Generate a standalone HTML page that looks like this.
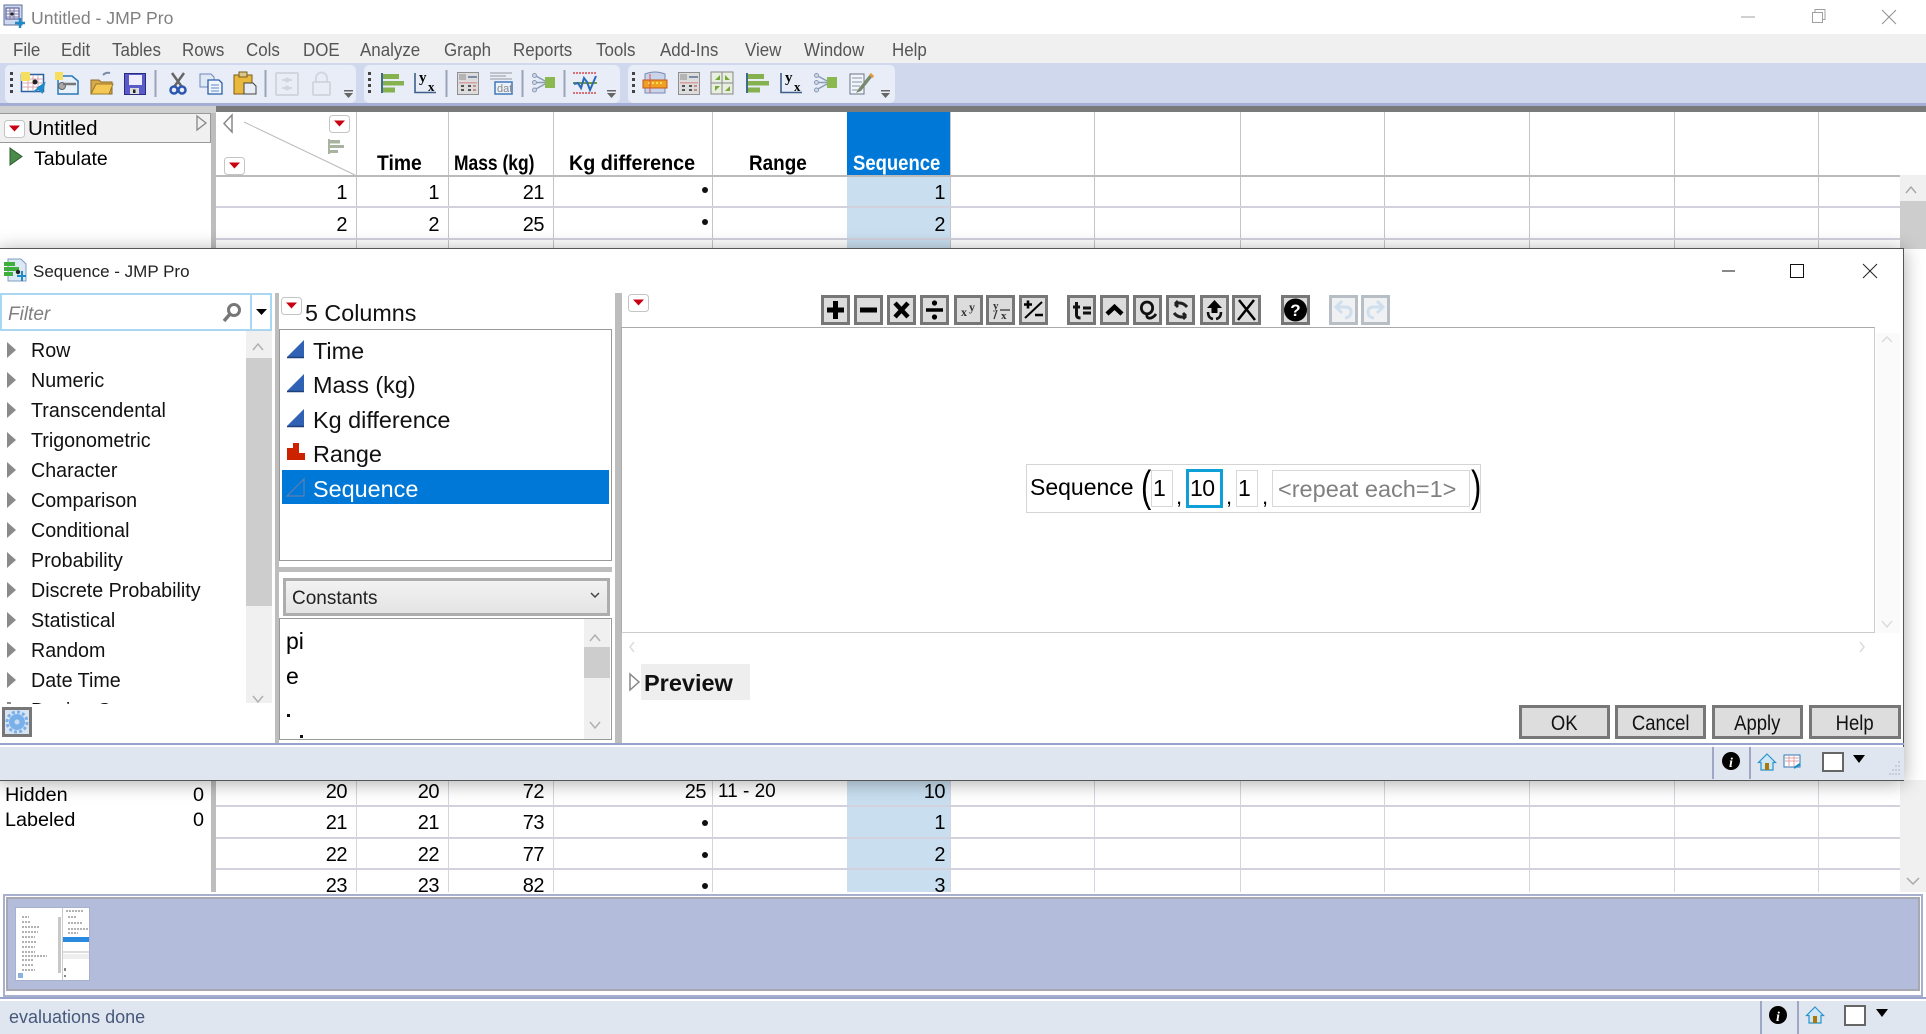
<!DOCTYPE html>
<html lang="en"><head><meta charset="utf-8"><title>Sequence - JMP Pro</title>
<style>
html,body{margin:0;padding:0;width:1926px;height:1034px;overflow:hidden;background:#fff;font-family:"Liberation Sans",sans-serif;color:#000}
.t{position:absolute;line-height:0;white-space:nowrap}
.r{transform:translateX(-100%)}
.b{position:absolute;box-sizing:border-box}
.m{font-size:18px;color:#555;top:50px;transform:scaleX(.94);transform-origin:left}
.n{font-size:20px;letter-spacing:-.5px;transform:translateX(-100%)}
.h{font-size:21px;font-weight:bold;top:164px;transform-origin:left}
.tr{font-size:20.5px;left:31px;color:#111;transform:scaleX(.96);transform-origin:left}
.c{font-size:23.4px;left:313px;color:#111}
.v{background:#d5d5e0;width:1px}
.hl{background:#d2d2de;height:2px}
.fb{position:absolute;top:295px;width:29px;height:30px;box-sizing:border-box;border:3px solid #777;background:#dcdcdc}
.fb svg{display:block;width:23px;height:24px}
.fb.d{border-color:#b7bec6;background:#f0f1f2}
.btn{position:absolute;top:705px;width:91px;height:34px;box-sizing:border-box;border:3px solid #777;background:#dddddd;text-align:center;font-size:21px;line-height:31px;color:#111}
.btn span{display:inline-block;transform:scaleX(.88)}
.g{position:absolute;top:65px;height:38px;background:#e8edf8;border-radius:5px}
.fx{position:absolute;top:470px;height:37px;box-sizing:border-box;border:1px solid #d8d8d8}
</style></head><body>

<!-- main window chrome -->
<div class="b" style="left:0;top:34px;width:1926px;height:29px;background:#f0f0f0"></div>
<div class="t" style="left:31px;top:18px;font-size:17.6px;color:#808080">Untitled - JMP Pro</div>
<div class="t m" style="left:13px">File</div><div class="t m" style="left:61px">Edit</div><div class="t m" style="left:112px">Tables</div><div class="t m" style="left:182px">Rows</div><div class="t m" style="left:246px">Cols</div><div class="t m" style="left:303px">DOE</div><div class="t m" style="left:360px">Analyze</div><div class="t m" style="left:444px">Graph</div><div class="t m" style="left:513px">Reports</div><div class="t m" style="left:596px">Tools</div><div class="t m" style="left:660px">Add-Ins</div><div class="t m" style="left:745px">View</div><div class="t m" style="left:804px">Window</div><div class="t m" style="left:892px">Help</div>

<div class="b" style="left:0;top:63px;width:1926px;height:41px;background:#d0d8ee"></div>
<div class="b" style="left:0;top:103px;width:1926px;height:3px;background:#a3aed2"></div>
<div class="g" style="left:5px;width:351px"></div><div class="g" style="left:364px;width:256px"></div><div class="g" style="left:628px;width:267px"></div>
<div class="b" style="left:0;top:106px;width:216px;height:7px;background:#cfcfcf"></div>
<div class="b" style="left:216px;top:106px;width:1710px;height:6px;background:#7a7a7a"></div>

<!-- left panel -->
<div class="b" style="left:0;top:113px;width:211px;height:30px;background:#f0f0f0;border:1.5px solid #999;border-left:0"></div>
<div class="b" style="left:211px;top:113px;width:5px;height:136px;background:#bdbdbd"></div>
<div class="b" style="left:211px;top:780px;width:5px;height:112px;background:#bdbdbd"></div>
<div class="t" style="left:28px;top:129px;font-size:20.5px">Untitled</div>
<div class="t" style="left:34px;top:159px;font-size:19.5px">Tabulate</div>
<div class="t" style="left:5px;top:795px;font-size:19.8px">Hidden</div>
<div class="t r" style="left:204px;top:795px;font-size:19.8px">0</div>
<div class="t" style="left:5px;top:820px;font-size:19.8px">Labeled</div>
<div class="t r" style="left:204px;top:820px;font-size:19.8px">0</div>

<!-- data table top -->
<div class="b" style="left:847px;top:112px;width:103px;height:63px;background:#0078d7"></div>
<div class="b" style="left:847px;top:175px;width:103px;height:74px;background:#c9dff0"></div>
<div class="b" style="left:847px;top:780px;width:103px;height:112px;background:#c9dff0"></div>
<div class="b v" style="left:356px;top:112px;height:137px;background:#c4c4cc"></div><div class="b v" style="left:448px;top:112px;height:137px;background:#c4c4cc"></div><div class="b v" style="left:553px;top:112px;height:137px;background:#c4c4cc"></div><div class="b v" style="left:712px;top:112px;height:137px;background:#c4c4cc"></div><div class="b v" style="left:950px;top:112px;height:137px;background:#c4c4cc"></div><div class="b v" style="left:1094px;top:112px;height:137px;background:#c4c4cc"></div><div class="b v" style="left:1240px;top:112px;height:137px;background:#c4c4cc"></div><div class="b v" style="left:1384px;top:112px;height:137px;background:#c4c4cc"></div><div class="b v" style="left:1529px;top:112px;height:137px;background:#c4c4cc"></div><div class="b v" style="left:1674px;top:112px;height:137px;background:#c4c4cc"></div><div class="b v" style="left:1818px;top:112px;height:137px;background:#c4c4cc"></div>
<div class="b" style="left:216px;top:175px;width:1684px;height:2px;background:#bbb"></div>
<div class="b hl" style="left:216px;top:206px;width:1684px"></div>
<div class="b hl" style="left:216px;top:238px;width:1684px"></div>
<div class="t h" style="left:377px;transform:scaleX(.92)">Time</div>
<div class="t h" style="left:454px;transform:scaleX(.83)">Mass (kg)</div>
<div class="t h" style="left:569px;transform:scaleX(.94)">Kg difference</div>
<div class="t h" style="left:749px;transform:scaleX(.9)">Range</div>
<div class="t h" style="left:853px;color:#fff;transform:scaleX(.88)">Sequence</div>
<div class="t n" style="left:347px;top:193px">1</div><div class="t n" style="left:439px;top:193px">1</div><div class="t n" style="left:544px;top:193px">21</div><div class="t n" style="left:945px;top:193px">1</div>
<div class="t n" style="left:347px;top:225px">2</div><div class="t n" style="left:439px;top:225px">2</div><div class="t n" style="left:544px;top:225px">25</div><div class="t n" style="left:945px;top:225px">2</div>
<div class="t n" style="left:347px;top:257px">3</div><div class="t n" style="left:439px;top:257px">3</div><div class="t n" style="left:544px;top:257px">27</div><div class="t n" style="left:945px;top:257px">3</div>
<div class="b" style="left:702px;top:187px;width:6px;height:6px;border-radius:3px;background:#111"></div>
<div class="b" style="left:702px;top:219px;width:6px;height:6px;border-radius:3px;background:#111"></div>

<!-- data table bottom -->
<div class="b v" style="left:356px;top:780px;height:112px"></div><div class="b v" style="left:448px;top:780px;height:112px"></div><div class="b v" style="left:553px;top:780px;height:112px"></div><div class="b v" style="left:712px;top:780px;height:112px"></div><div class="b v" style="left:950px;top:780px;height:112px"></div><div class="b v" style="left:1094px;top:780px;height:112px"></div><div class="b v" style="left:1240px;top:780px;height:112px"></div><div class="b v" style="left:1384px;top:780px;height:112px"></div><div class="b v" style="left:1529px;top:780px;height:112px"></div><div class="b v" style="left:1674px;top:780px;height:112px"></div><div class="b v" style="left:1818px;top:780px;height:112px"></div>
<div class="b hl" style="left:216px;top:805px;width:1684px"></div>
<div class="b hl" style="left:216px;top:837px;width:1684px"></div>
<div class="b hl" style="left:216px;top:868px;width:1684px"></div>
<div class="t n" style="left:347px;top:792px">20</div><div class="t n" style="left:439px;top:792px">20</div><div class="t n" style="left:544px;top:792px">72</div><div class="t n" style="left:706px;top:792px">25</div><div class="t" style="left:718px;top:792px;font-size:19px">11 - 20</div><div class="t n" style="left:945px;top:792px">10</div>
<div class="t n" style="left:347px;top:823px">21</div><div class="t n" style="left:439px;top:823px">21</div><div class="t n" style="left:544px;top:823px">73</div><div class="t n" style="left:945px;top:823px">1</div>
<div class="t n" style="left:347px;top:855px">22</div><div class="t n" style="left:439px;top:855px">22</div><div class="t n" style="left:544px;top:855px">77</div><div class="t n" style="left:945px;top:855px">2</div>
<div style="position:absolute;left:216px;top:870px;width:760px;height:22px;overflow:hidden"><div class="t n" style="left:131px;top:16px">23</div><div class="t n" style="left:223px;top:16px">23</div><div class="t n" style="left:328px;top:16px">82</div><div class="t n" style="left:729px;top:16px">3</div></div>
<div class="b" style="left:702px;top:820px;width:6px;height:6px;border-radius:3px;background:#111"></div>
<div class="b" style="left:702px;top:852px;width:6px;height:6px;border-radius:3px;background:#111"></div>
<div class="b" style="left:702px;top:883px;width:6px;height:6px;border-radius:3px;background:#111"></div>

<!-- right scrollbar -->
<div class="b" style="left:1900px;top:175px;width:26px;height:74px;background:#f0f0f0"></div>
<div class="b" style="left:1900px;top:201px;width:26px;height:48px;background:#cdcdcd"></div>
<div class="b" style="left:1900px;top:780px;width:26px;height:112px;background:#f0f0f0"></div>

<!-- thumbnail strip -->
<div class="b" style="left:3px;top:894px;width:1920px;height:103px;border:2px solid #a8b0cf;background:#fff"></div>
<div class="b" style="left:6px;top:897px;width:1914px;height:94px;border:2px solid #a8a8b0;background:#b3bcda"></div>
<div class="b" style="left:0;top:997px;width:1926px;height:2px;background:#97a3cb"></div>
<div class="b" style="left:0;top:1001px;width:1926px;height:33px;background:#e0e6f0"></div>
<div class="t" style="left:9px;top:1017px;font-size:18px;color:#47587a">evaluations done</div>
<div class="b" style="left:1760px;top:1001px;width:2px;height:33px;background:#9ea7c4"></div>
<div class="b" style="left:1797px;top:1001px;width:2px;height:33px;background:#9ea7c4"></div>
<div class="b" style="left:1844px;top:1005px;width:22px;height:21px;background:#fff;border:2px solid #666"></div>

<!-- dialog -->
<div class="b" style="left:-2px;top:248px;width:1906px;height:533px;background:#fff;border:1px solid #555;box-shadow:0 2px 18px rgba(0,0,0,.33)"></div>
<div class="t" style="left:33px;top:272px;font-size:17px;color:#222">Sequence - JMP Pro</div>

<!-- function tree -->
<div class="b" style="left:0;top:293px;width:272px;height:38px;border:2px solid #a9d6f0;background:#fff"></div>
<div class="b" style="left:250px;top:293px;width:2px;height:38px;background:#a9d6f0"></div>
<div class="t" style="left:8px;top:315px;font-size:19px;font-style:italic;color:#808080">Filter</div>
<div class="b" style="left:246px;top:331px;width:26px;height:372px;background:#f0f0f0"></div>
<div class="b" style="left:246px;top:358px;width:26px;height:248px;background:#cdcdcd"></div>
<div class="t tr" style="top:351px">Row</div><div class="t tr" style="top:381px">Numeric</div><div class="t tr" style="top:411px">Transcendental</div><div class="t tr" style="top:441px">Trigonometric</div><div class="t tr" style="top:471px">Character</div><div class="t tr" style="top:501px">Comparison</div><div class="t tr" style="top:531px">Conditional</div><div class="t tr" style="top:561px">Probability</div><div class="t tr" style="top:591px">Discrete Probability</div><div class="t tr" style="top:621px">Statistical</div><div class="t tr" style="top:651px">Random</div><div class="t tr" style="top:681px">Date Time</div>
<div style="position:absolute;left:0;top:700px;width:246px;height:4px;overflow:hidden"><div class="t tr" style="top:11px">Design Spec</div></div>
<div class="b" style="left:2px;top:707px;width:30px;height:30px;border:3px solid #777;background:#d8e4f2"></div>

<!-- columns -->
<div class="b" style="left:275px;top:293px;width:4px;height:452px;background:#bdbdbd"></div>
<div class="b" style="left:615px;top:293px;width:7px;height:452px;background:#bdbdbd"></div>
<div class="t" style="left:305px;top:313px;font-size:23.3px;color:#111">5 Columns</div>
<div class="b" style="left:279px;top:329px;width:333px;height:232px;border:1px solid #999;background:#fff"></div>
<div class="b" style="left:282px;top:470px;width:327px;height:34px;background:#0078d7"></div>
<div class="t c" style="top:351px">Time</div><div class="t c" style="top:385px">Mass (kg)</div><div class="t c" style="top:420px">Kg difference</div><div class="t c" style="top:454px">Range</div><div class="t c" style="top:489px;color:#fff">Sequence</div>
<div class="b" style="left:279px;top:567px;width:333px;height:5px;background:#bdbdbd"></div>
<div class="b" style="left:283px;top:578px;width:327px;height:38px;border:3px solid #adadad;background:linear-gradient(#f2f2f2,#e4e4e4)"></div>
<div class="t" style="left:292px;top:599px;font-size:19px;color:#222">Constants</div>
<div class="b" style="left:279px;top:618px;width:333px;height:122px;border:1px solid #999;background:#fff;overflow:hidden">
<div class="t" style="left:6px;top:22px;font-size:23px">pi</div><div class="t" style="left:6px;top:57px;font-size:23px">e</div>
<div class="b" style="left:7px;top:95px;width:3px;height:3px;background:#111"></div>
<div class="b" style="left:20px;top:116px;width:3px;height:3px;background:#111"></div>
<div class="b" style="left:304px;top:0;width:26px;height:122px;background:#f0f0f0"></div>
<div class="b" style="left:304px;top:28px;width:26px;height:31px;background:#cdcdcd"></div>
</div>

<!-- formula editor -->
<div class="b" style="left:621px;top:327px;width:1254px;height:306px;border:1px solid #aaa;border-right-color:#ccc;border-bottom-color:#ccc;background:#fff"></div>
<div class="b" style="left:1876px;top:333px;width:24px;height:300px;background:#fafafa"></div>
<div class="b" style="left:1026px;top:464px;width:455px;height:49px;border:1.5px solid #d4d4d4"></div>
<div class="t" style="left:1030px;top:487px;font-size:23px">Sequence</div>
<div class="t" style="left:1141px;top:487px;font-size:44px;font-weight:normal;transform:scaleX(.7);transform-origin:left">(</div>
<div class="fx" style="left:1151px;width:22px"></div>
<div class="t" style="left:1153px;top:488px;font-size:23px">1</div>
<div class="t" style="left:1176px;top:497px;font-size:22px">,</div>
<div class="b" style="left:1186px;top:469px;width:37px;height:39px;border:3px solid #0ea0d6"></div>
<div class="t" style="left:1190px;top:488px;font-size:23px;letter-spacing:-.5px">10</div>
<div class="t" style="left:1226px;top:497px;font-size:22px">,</div>
<div class="fx" style="left:1236px;width:22px"></div>
<div class="t" style="left:1238px;top:488px;font-size:23px">1</div>
<div class="t" style="left:1262px;top:497px;font-size:22px">,</div>
<div class="fx" style="left:1272px;width:198px"></div>
<div class="t" style="left:1278px;top:489px;font-size:23.5px;color:#808080">&lt;repeat each=1&gt;</div>
<div class="t" style="left:1471px;top:487px;font-size:44px;transform:scaleX(.7);transform-origin:left">)</div>

<div class="fb" style="left:821px"><svg viewBox="0 0 23 24"><path d="M11.5 3v18M3 12h17" stroke="#000" stroke-width="5" fill="none"/></svg></div>
<div class="fb" style="left:854px"><svg viewBox="0 0 23 24"><path d="M3 12h17" stroke="#000" stroke-width="5" fill="none"/></svg></div>
<div class="fb" style="left:887px"><svg viewBox="0 0 23 24"><path d="M5 5l13 14M18 5L5 19" stroke="#000" stroke-width="4.5" fill="none"/></svg></div>
<div class="fb" style="left:920px"><svg viewBox="0 0 23 24"><path d="M3 12h17" stroke="#000" stroke-width="3.5"/><circle cx="11.5" cy="5" r="2.6"/><circle cx="11.5" cy="19" r="2.6"/></svg></div>
<div class="fb" style="left:954px"><svg viewBox="0 0 23 24"><text x="4" y="18" font-family="Liberation Serif" font-weight="bold" font-size="12" fill="#333">x</text><text x="12" y="13" font-family="Liberation Serif" font-weight="bold" font-size="12" fill="#333">y</text></svg></div>
<div class="fb" style="left:986px"><svg viewBox="0 0 23 24"><text x="4" y="11" font-family="Liberation Serif" font-weight="bold" font-size="11" fill="#333">y</text><text x="12" y="21" font-family="Liberation Serif" font-weight="bold" font-size="11" fill="#333">x</text><path d="M5 21l3-9M11 12h10" stroke="#333" stroke-width="1.2" fill="none"/></svg></div>
<div class="fb" style="left:1019px"><svg viewBox="0 0 23 24"><path d="M2 6.500h8M6 2.500v8M13 17h8" stroke="#000" stroke-width="2.600" fill="none"/><path d="M3 20L20 4" stroke="#000" stroke-width="2" fill="none"/></svg></div>
<div class="fb" style="left:1067px"><svg viewBox="0 0 23 24"><path d="M6.500 4v13q0 3 4 3M3 9h7M13 10h8M13 15h8" stroke="#111" stroke-width="3" fill="none"/></svg></div>
<div class="fb" style="left:1100px"><svg viewBox="0 0 23 24"><path d="M4 16l7.500-7 7.500 7" stroke="#000" stroke-width="4.500" fill="none"/></svg></div>
<div class="fb" style="left:1133px"><svg viewBox="0 0 23 24"><path d="M11 16C3 15 4 4 11 4s8 11 0 12q-1 5 4 4 3-1 5-4" stroke="#111" stroke-width="2.800" fill="none"/></svg></div>
<div class="fb" style="left:1166px"><svg viewBox="0 0 23 24"><path d="M18 9Q13 3 6 6M6 6l3-3M6 6l3 3" stroke="#222" stroke-width="3" fill="none"/><path d="M5 15q5 6 12 3M17 18l-3 3M17 18l-3-3" stroke="#222" stroke-width="3" fill="none"/></svg></div>
<div class="fb" style="left:1200px"><svg viewBox="0 0 23 24"><path d="M11.500 2L4 10h4.500v5h6v-5H19z" fill="#000"/><path d="M5 14q0 6 5 7M18 14q0 6-5 7" stroke="#111" stroke-width="2.500" fill="none"/></svg></div>
<div class="fb" style="left:1232px"><svg viewBox="0 0 23 24"><path d="M4 2l16 20M19 2L3 22" stroke="#000" stroke-width="2.500" fill="none"/></svg></div>
<div class="fb" style="left:1281px"><svg viewBox="0 0 23 24"><circle cx="11.500" cy="12" r="11.500"/><text x="11.500" y="18" text-anchor="middle" font-size="17" font-weight="bold" fill="#fff" font-family="Liberation Sans">?</text></svg></div>
<div class="fb d" style="left:1329px"><svg viewBox="0 0 23 24"><path d="M4 9h9q6 0 6 5t-6 6" stroke="#cfdfee" stroke-width="3" fill="none"/><path d="M10 3L4 9l6 6" stroke="#cfdfee" stroke-width="3" fill="none"/></svg></div>
<div class="fb d" style="left:1361px"><svg viewBox="0 0 23 24"><path d="M19 9h-9q-6 0-6 5t6 6" stroke="#cfdfee" stroke-width="3" fill="none"/><path d="M13 3l6 6-6 6" stroke="#cfdfee" stroke-width="3" fill="none"/></svg></div>

<div class="b" style="left:641px;top:664px;width:109px;height:36px;background:#eeeeee"></div>
<div class="t" style="left:644px;top:683px;font-size:23.5px;font-weight:bold;color:#111">Preview</div>

<div class="btn" style="left:1519px"><span>OK</span></div>
<div class="btn" style="left:1615px"><span>Cancel</span></div>
<div class="btn" style="left:1712px"><span>Apply</span></div>
<div class="btn" style="left:1809px;width:92px"><span>Help</span></div>

<!-- dialog status -->
<div class="b" style="left:0;top:743px;width:1904px;height:2px;background:#97a3cb"></div>
<div class="b" style="left:0;top:747px;width:1904px;height:33px;background:#e0e6f0"></div>
<div class="b" style="left:1712px;top:747px;width:2px;height:32px;background:#9ea7c4"></div>
<div class="b" style="left:1749px;top:747px;width:2px;height:32px;background:#9ea7c4"></div>
<div class="b" style="left:1822px;top:752px;width:22px;height:20px;background:#fff;border:2px solid #666"></div>

<!-- icon layer -->
<svg style="position:absolute;left:0;top:0" width="1926" height="1034" viewBox="0 0 1926 1034" font-family="Liberation Serif">
<defs>
<g id="rb"><rect x=".5" y=".5" width="20" height="17" rx="3" fill="#fff" stroke="#c4c4c4"/><path d="M5 5.500h11L10.500 11.500z" fill="#c80012"/></g>
<g id="grip" fill="#444"><rect width="3" height="3"/><rect y="6" width="3" height="3"/><rect y="12" width="3" height="3"/><rect y="18" width="3" height="3"/></g>
<path id="of" d="M0 0h9v1.500H0zM0 3h9L4.500 8z" fill="#666"/>
<g id="bars"><path d="M1 0v20" stroke="#3f6a8a" stroke-width="2"/><rect x="2" y="1" width="16" height="5" fill="#86b14f"/><rect x="2" y="8" width="21" height="4.500" fill="#86b14f"/><rect x="2" y="14.500" width="12" height="5" fill="#86b14f"/></g>
<g id="calc"><rect x=".5" y=".5" width="21" height="22" fill="#dcdcdc" stroke="#8f8f8f"/><rect x="2" y="2" width="7" height="6" fill="#b4b4b4"/><rect x="11" y="4" width="9" height="2" fill="#7a8aa8"/><rect x="2" y="10" width="18" height="1.500" fill="#d8a0a0"/><path d="M4 13h3v2H4zM4 17h3v2H4zM11 13h3v2h-3zM11 17h3v2h-3z" fill="#555"/><path d="M16 13h3v2h-3zM16 17h3v2h-3z" fill="#c98a8a"/></g>
<g id="grn"><rect x="13" y="4" width="10" height="11" fill="#8cb850"/><path d="M2 2l11 6M2 9.500h11M2 17l11-6" stroke="#8a9cb8" stroke-width="1.500"/><circle cx="2.500" cy="2.500" r="2" fill="#cfd8e6" stroke="#8a9cb8"/><circle cx="2.500" cy="9.500" r="2" fill="#cfd8e6" stroke="#8a9cb8"/><circle cx="2.500" cy="17" r="2" fill="#cfd8e6" stroke="#8a9cb8"/></g>
<path id="home" d="M8.500 0L17 8.500h-2.500V16h-12V8.500H0z" fill="#cfe6f6" stroke="#2b93c9" stroke-width="1.200"/>
</defs>

<!-- window controls -->
<path d="M1741 17h14" stroke="#a0a0a0"/>
<path d="M1812.500 12.500h10v10h-10zM1815 12v-2.500h10v10h-2.500" stroke="#a0a0a0" fill="none"/>
<path d="M1882 10l14 14M1896 10l-14 14" stroke="#909090" fill="none"/>
<path d="M1722 271h13" stroke="#111"/><rect x="1790.500" y="264.500" width="13" height="13" fill="none" stroke="#111"/>
<path d="M1863 264l14 14M1877 264l-14 14" stroke="#222" fill="none"/>

<!-- app icon -->
<rect x="4" y="5" width="18" height="20" fill="#cfdaf0" stroke="#5a6f98"/><path d="M6 8h13v11H6z" fill="#f4f4fa" stroke="#4a4a88"/><path d="M6 11h13M6 14h13M6 17h13M10 8v11M14 8v11" stroke="#7a7aa8"/><circle cx="12" cy="14" r="1.600" fill="#222"/><path d="M20 18v10M15 23h10" stroke="#1f8ac8" stroke-width="2.500"/>

<!-- dialog icon -->
<path d="M8 259h13l5 5v17H8z" fill="#dce8f4" stroke="#7f9cc0"/><g fill="#3fae3a"><rect x="4" y="262" width="11" height="4"/><rect x="4" y="267" width="15" height="4"/><rect x="4" y="272" width="9" height="4"/></g><circle cx="18" cy="272" r="2.200" fill="#222"/><path d="M22 271v10M17 276h9" stroke="#1f8ac8" stroke-width="2"/>

<!-- toolbar group 1 -->
<use href="#grip" x="10" y="72"/>
<g><rect x="21.500" y="74.500" width="22" height="17" fill="#fff" stroke="#2a5fa0" stroke-width="1.500"/><path d="M22 79h21M22 83h21M22 87h21M28 75v16M33 75v16M38 75v16" stroke="#d8a8b0"/><circle cx="35" cy="82" r="2.500" fill="#222"/><path d="M21 72h9v9h-9z" fill="#f6de60"/><path d="M38 88l6-4-2 8zM34 92l6-5" stroke="#1f8ac8" stroke-width="2" fill="#1f8ac8"/></g>
<g><path d="M58 76h14l6 5v13H58z" fill="#e8f0fa" stroke="#2a78b8" stroke-width="1.500"/><path d="M55 72h8v8h-8z" fill="#f6de60"/><circle cx="62" cy="86" r="3.500" fill="#aaa" stroke="#666"/><path d="M63 84h13" stroke="#777" stroke-width="2.500"/></g>
<g><path d="M91 80h8l2 2h11v12H91z" fill="#d8a94a" stroke="#8a6a2a"/><path d="M91 94l5-10h17l-4 10z" fill="#f4c852" stroke="#9a7a2a"/><path d="M103 75q3-3 7-2" stroke="#7a8aa0" stroke-width="2" fill="none"/></g>
<g><rect x="124.500" y="73.500" width="21" height="21" fill="#5a5ac8" stroke="#2a2a80"/><rect x="129" y="75" width="13" height="10" fill="#eef"/><rect x="130" y="88" width="9" height="6" fill="#ddd"/><rect x="133" y="89.500" width="2.500" height="3.500" fill="#222"/></g>
<rect x="154.500" y="70" width="2" height="27" fill="#9aa2b8"/>
<g><path d="M172 73l10 14M184 73l-10 14" stroke="#666" stroke-width="2.500"/><circle cx="174" cy="90" r="3.500" fill="none" stroke="#2c55b0" stroke-width="2.500"/><circle cx="182" cy="90" r="3.500" fill="none" stroke="#2c55b0" stroke-width="2.500"/></g>
<g><path d="M200 74h11l3 3v10h-14z" fill="#dfe9f6" stroke="#6c88b8"/><path d="M208 80h11l3 3v11h-14z" fill="#f2f6fc" stroke="#2a5fa8" stroke-width="1.300"/><path d="M211 85h8M211 88h8M211 91h8" stroke="#5b88c8"/></g>
<g><rect x="234" y="75" width="18" height="19" fill="#e8b93c" stroke="#7a5a1a"/><rect x="239" y="72" width="8" height="5" fill="#d8c88a" stroke="#7a5a1a"/><path d="M244 83h9l3 3v8h-12z" fill="#e8ecf4" stroke="#444"/></g>
<rect x="264.500" y="70" width="2" height="27" fill="#9aa2b8"/>
<g fill="none" stroke="#d2d7de" stroke-width="2"><rect x="276" y="73" width="22" height="22" rx="1"/><path d="M282 80h10M282 88h10"/><circle cx="287" cy="80" r="1.500"/><circle cx="287" cy="88" r="1.500"/><rect x="313" y="82" width="17" height="13" rx="1"/><path d="M316 82v-4a5.500 5.500 0 0111 0v4"/></g>
<use href="#of" x="344" y="90"/>

<!-- toolbar group 2 -->
<use href="#grip" x="368" y="72"/>
<use href="#bars" x="381" y="73"/>
<path d="M415 73v19.500h21" stroke="#3f5f8a" stroke-width="1.600" fill="none"/><text x="419" y="82" font-size="15" font-weight="bold">y</text><text x="428" y="91" font-size="13" font-weight="bold">x</text>
<rect x="445.500" y="70" width="2" height="27" fill="#9aa2b8"/>
<use href="#calc" x="457" y="72"/>
<path d="M490 73h22M490 76h16M490 79h22" stroke="#b0b4bc" stroke-width="1.500"/><rect x="495" y="82" width="17" height="12" fill="#eaf2fa" stroke="#3f78b8" stroke-width="1.500"/><text x="497" y="92" font-size="11" fill="#888" font-family="Liberation Sans">dat</text>
<rect x="521.500" y="70" width="2" height="27" fill="#9aa2b8"/>
<use href="#grn" x="532" y="73"/>
<rect x="563.500" y="70" width="2" height="27" fill="#9aa2b8"/>
<path d="M573 73h24M573 93h24" stroke="#d24a4a" stroke-dasharray="2 1" stroke-width="1.500"/><path d="M573 83h24" stroke="#5d8f2a" stroke-width="1.800"/><path d="M574 84l4-1 3 5 3-10 3 4 3 8 3-7 3-7" stroke="#2a68b8" stroke-width="2" fill="none"/>
<use href="#of" x="607" y="90"/>

<!-- toolbar group 3 -->
<use href="#grip" x="632" y="72"/>
<g><path d="M645 74q10-4 20 0v19h-20z" fill="#c8d4ea" stroke="#7a8ab0"/><rect x="643" y="80" width="24" height="8" fill="#f0a020" stroke="#c05820"/><path d="M648 83h2M652 83h2M656 83h2M660 83h2" stroke="#f6e060" stroke-width="2"/><path d="M650 74v19" stroke="#e05060"/></g>
<use href="#calc" x="678" y="72"/>
<g><rect x="711" y="72" width="22" height="22" fill="#e8eee0" stroke="#888"/><path d="M722 72v22M711 83h22" stroke="#888"/><path d="M715 80h5v-5zM725 75v5h5zM715 91v-5h5zM730 91h-5l5-5z" fill="#78a838"/></g>
<use href="#bars" x="746" y="73"/>
<path d="M781 73v19.500h21" stroke="#3f5f8a" stroke-width="1.600" fill="none"/><text x="785" y="82" font-size="15" font-weight="bold">y</text><text x="794" y="91" font-size="13" font-weight="bold">x</text>
<use href="#grn" x="814" y="73"/>
<g><rect x="850" y="74" width="14" height="20" fill="#f2f5fa" stroke="#6a7488"/><path d="M852 78h10M852 82h10M852 86h8M852 90h6" stroke="#8a94a8"/><path d="M871 73l-12 15-3 5 5-2 12-15z" fill="#7a8a70"/><path d="M869 75l4 3 1-2-3-3z" fill="#e89a3a"/></g>
<use href="#of" x="881" y="90"/>

<!-- corner cell & outline -->
<use href="#rb" x="4" y="120"/>
<path d="M197 116l9 7-9 7z" fill="none" stroke="#888" stroke-width="1.300"/>
<path d="M10 148l12 8.500-12 8.500z" fill="#4a8a4a" stroke="#2f5f2f"/>
<path d="M232 115l-8 8.500 8 8.500z" fill="none" stroke="#888" stroke-width="1.500"/>
<use href="#rb" x="329" y="115"/>
<path d="M244 122L355 175" stroke="#bbb"/>
<g fill="#a8b4a0"><rect x="328" y="139" width="2" height="15"/><rect x="330" y="140" width="10" height="3.500"/><rect x="330" y="145" width="14" height="3"/><rect x="330" y="150" width="8" height="3"/></g>
<use href="#rb" x="224" y="157"/>
<path d="M1906 193l5-6 5 6" fill="none" stroke="#a8a8a8" stroke-width="1.500"/>
<path d="M1907 878l6 6 6-6" fill="none" stroke="#a8a8a8" stroke-width="1.500"/>

<!-- tree -->
<g fill="#8a8a8a"><path d="M7 342l9 8-9 8zM7 372l9 8-9 8zM7 402l9 8-9 8zM7 432l9 8-9 8zM7 462l9 8-9 8zM7 492l9 8-9 8zM7 522l9 8-9 8zM7 552l9 8-9 8zM7 582l9 8-9 8zM7 612l9 8-9 8zM7 642l9 8-9 8zM7 672l9 8-9 8zM7 702h4v2H7z"/></g>
<g fill="none" stroke="#777" stroke-width="3.500"><circle cx="234" cy="310" r="5.500" stroke-width="3"/><path d="M230 314l-6 7"/></g>
<path d="M256 309h11l-5.500 6z" fill="#000"/>
<path d="M253 350l5-6 5 6M253 696l5 6 5-6" fill="none" stroke="#b0b0b0" stroke-width="1.500"/>
<g transform="translate(17 722)"><circle r="8" fill="#7ab0ea"/><circle r="10" fill="none" stroke="#7ab0ea" stroke-width="3" stroke-dasharray="3 2.200"/><circle r="2.500" fill="#c8dcf0"/></g>

<!-- column icons -->
<use href="#rb" x="281" y="297"/>
<g fill="#2f62b4"><path d="M304 340v17h-17z"/><path d="M304 374v17h-17z"/><path d="M304 409v17h-17z"/></g>
<g stroke="#1f3f7a" stroke-width="1.500"><path d="M287 357.500h17M287 391.500h17M287 426.500h17"/></g>
<g fill="#cc2200"><rect x="287" y="448" width="6" height="12"/><rect x="293" y="443" width="6" height="17"/><rect x="299" y="453" width="6" height="7"/></g>
<path d="M304 479v17h-17z" fill="none" stroke="#5c7fb0" stroke-width="1.200"/>
<path d="M591 593l4 4 4-4" fill="none" stroke="#444" stroke-width="1.500"/>
<path d="M590 641l5-6 5 6M590 722l5 6 5-6" fill="none" stroke="#b0b0b0" stroke-width="1.500"/>

<!-- formula side -->
<use href="#rb" x="628" y="294"/>
<path d="M1882 342l5-5 5 5M1882 621l5 6 5-6M634 642l-4 5 4 5M1860 642l4 5-4 5" fill="none" stroke="#dcdcdc" stroke-width="1.500"/>
<path d="M630 674l9 8-9 8z" fill="#fff" stroke="#888" stroke-width="1.500"/>

<!-- dialog status icons -->
<circle cx="1731" cy="761" r="9"/><text x="1731" y="767" text-anchor="middle" fill="#fff" font-size="14" font-weight="bold" font-style="italic">i</text>
<use href="#home" x="1758.500" y="754"/><rect x="1765" y="763" width="4" height="7" fill="#a87808"/>
<rect x="1784" y="755" width="16" height="12" fill="#fff" stroke="#2a78b8"/><path d="M1785 758h14M1785 761h14M1789 755v12M1794 755v12" stroke="#e0a0a8"/><path d="M1794 768l6-4" stroke="#1f8ac8" stroke-width="2"/>
<path d="M1853 755h12l-6 8z"/>
<g fill="#c6cddf"><rect x="1898" y="761" width="2" height="2"/><rect x="1895" y="765" width="2" height="2"/><rect x="1898" y="765" width="2" height="2"/><rect x="1892" y="769" width="2" height="2"/><rect x="1895" y="769" width="2" height="2"/><rect x="1898" y="769" width="2" height="2"/><rect x="1889" y="773" width="2" height="2"/><rect x="1892" y="773" width="2" height="2"/><rect x="1895" y="773" width="2" height="2"/><rect x="1898" y="773" width="2" height="2"/></g>

<!-- bottom status icons -->
<circle cx="1778" cy="1015" r="9"/><text x="1778" y="1021" text-anchor="middle" fill="#fff" font-size="14" font-weight="bold" font-style="italic">i</text>
<use href="#home" x="1806.500" y="1007"/><rect x="1813" y="1016" width="4" height="7" fill="#a87808"/>
<path d="M1876 1009h12l-6 8z"/>

<!-- thumbnail -->
<rect x="15.500" y="907.500" width="74" height="73" fill="#fff" stroke="#a8b0cf"/>
<g stroke="#999" stroke-width="1.500" stroke-dasharray="2 1" fill="none"><path d="M22 917h7M22 922h9M22 927h18M22 932h16M22 937h13M22 942h15M22 947h13M22 952h13M22 956h25M22 960h11M22 965h11M22 970h13"/><path d="M66 911h18M68 917h9M68 923h14M68 929h20M68 933h10"/></g>
<rect x="58" y="917" width="3" height="56" fill="#c8c8c8"/><rect x="62" y="908" width="1" height="72" fill="#ccc"/>
<rect x="63" y="937" width="26" height="5" fill="#2a8ae0"/><rect x="63" y="951" width="26" height="2" fill="#ddd"/><rect x="63" y="954" width="26" height="5" fill="#eee"/>
<rect x="64" y="968" width="2" height="3" fill="#888"/><rect x="64" y="975" width="2" height="2" fill="#888"/><rect x="18" y="973" width="5" height="5" fill="#8ab4e0"/>
</svg>
</body></html>
